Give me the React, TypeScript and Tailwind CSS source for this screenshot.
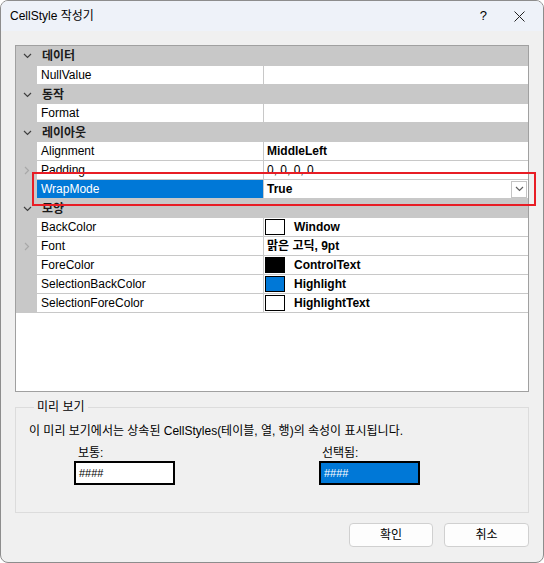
import React from "react";

type Row =
  | { kind: "cat"; label: string }
  | {
      kind: "prop";
      name: string;
      value?: string;
      bold?: boolean;
      swatch?: string;
      expand?: boolean;
      selected?: boolean;
    };

const rows: Row[] = [
  { kind: "cat", label: "데이터" },
  { kind: "prop", name: "NullValue" },
  { kind: "cat", label: "동작" },
  { kind: "prop", name: "Format" },
  { kind: "cat", label: "레이아웃" },
  { kind: "prop", name: "Alignment", value: "MiddleLeft", bold: true },
  { kind: "prop", name: "Padding", value: "0, 0, 0, 0", expand: true },
  { kind: "prop", name: "WrapMode", value: "True", bold: true, selected: true },
  { kind: "cat", label: "모양" },
  { kind: "prop", name: "BackColor", value: "Window", bold: true, swatch: "white" },
  { kind: "prop", name: "Font", value: "맑은 고딕, 9pt", bold: true, expand: true },
  { kind: "prop", name: "ForeColor", value: "ControlText", bold: true, swatch: "black" },
  { kind: "prop", name: "SelectionBackColor", value: "Highlight", bold: true, swatch: "blue" },
  { kind: "prop", name: "SelectionForeColor", value: "HighlightText", bold: true, swatch: "white" },
];

function ChevronDown({ className = "" }: { className?: string }) {
  return (
    <svg className={className} width="9" height="6" viewBox="0 0 9 6" fill="none">
      <path d="M1 1l3.5 3.5L8 1" stroke="currentColor" strokeWidth="1.2" />
    </svg>
  );
}

function ChevronRight() {
  return (
    <svg width="6" height="9" viewBox="0 0 6 9" fill="none" className="text-[#a8a8a8]">
      <path d="M1 1l3.5 3.5L1 8" stroke="currentColor" strokeWidth="1.2" />
    </svg>
  );
}

function Swatch({ color }: { color: string }) {
  const cls =
    color === "black" ? "bg-black" : color === "blue" ? "bg-[#0078d7]" : "bg-white";
  return <div className={`ml-[1px] h-[16px] w-[20px] shrink-0 border border-black ${cls}`} />;
}

function CategoryRow({ label, first }: { label: string; first?: boolean }) {
  return (
    <div className={`flex items-center bg-[#c8c8c8] ${first ? "h-[20px]" : "h-[19px]"}`}>
      <div className="flex w-[21px] justify-center pl-[1px] text-[#404040]">
        <ChevronDown />
      </div>
      <span className="pl-[5px] text-[12px] font-bold text-[#1a1a1a]">{label}</span>
    </div>
  );
}

function PropRow({ row }: { row: Extract<Row, { kind: "prop" }> }) {
  return (
    <div className="flex h-[19px]">
      <div className="flex w-[21px] shrink-0 items-center justify-center bg-[#c8c8c8]">
        {row.expand && <ChevronRight />}
      </div>
      <div className="flex flex-1 border-b border-[#c8c8c8]">
        <div
          className={`flex w-[227px] shrink-0 items-center border-r border-[#c8c8c8] pl-[4px] text-[12px] ${
            row.selected ? "bg-[#0078d7] text-white" : "text-black"
          }`}
        >
          {row.name}
        </div>
        <div className="flex flex-1 items-center text-[12px] text-black">
          {row.swatch ? (
            <>
              <Swatch color={row.swatch} />
              <span className="pl-[9px] font-bold">{row.value}</span>
            </>
          ) : (
            <span className={`pl-[3px] ${row.bold ? "font-bold" : ""}`}>{row.value}</span>
          )}
          {row.selected && (
            <div className="ml-auto mr-[1px] flex h-[17px] w-[16px] items-center justify-center border border-[#c4c4c4] bg-white text-[#606060]">
              <ChevronDown />
            </div>
          )}
        </div>
      </div>
    </div>
  );
}

export default function App() {
  return (
    <div className="relative flex h-[563px] w-[544px] flex-col overflow-hidden rounded-lg border border-[#8d8d8d] bg-[#f0f0f0] font-['Liberation_Sans','Noto_Sans_CJK_KR',sans-serif] text-black">
      {/* Title bar */}
      <div className="flex h-[30px] shrink-0 items-center bg-[#eef2f9] pl-[9px]">
        <span className="text-[12px]">CellStyle 작성기</span>
        <span className="ml-auto mr-[27px] text-[13px]">?</span>
        <svg className="mr-[18px]" width="11" height="11" viewBox="0 0 11 11" fill="none">
          <path d="M0.5 0.5l10 10M10.5 0.5l-10 10" stroke="#222" strokeWidth="1" />
        </svg>
      </div>

      <div className="flex flex-1 flex-col px-[14px] pt-[14px]">
        {/* Property grid */}
        <div className="flex h-[347px] flex-col border border-[#a0a0a0] bg-white">
          {rows.map((r, i) =>
            r.kind === "cat" ? (
              <CategoryRow key={i} label={r.label} first={i === 0} />
            ) : (
              <PropRow key={i} row={r} />
            )
          )}
        </div>

        {/* Preview group */}
        <fieldset className="mt-[7px] h-[114px] border border-[#dcdcdc] pb-0 pl-[13px]">
          <legend className="ml-[5px] px-[3px] text-[12px] leading-[16px]">미리 보기</legend>
          <div className="mt-[7px] text-[12px]">
            이 미리 보기에서는 상속된 CellStyles(테이블, 열, 행)의 속성이 표시됩니다.
          </div>
          <div className="mt-[5px] flex">
            <div className="ml-[45px] flex flex-col">
              <span className="pl-[4px] text-[12px] leading-[16px]">보통:</span>
              <div className="flex h-[24px] w-[101px] items-center border-2 border-black bg-white pl-[3px] text-[11px]">
                ####
              </div>
            </div>
            <div className="ml-[144px] flex flex-col">
              <span className="pl-[3px] text-[12px] leading-[16px]">선택됨:</span>
              <div className="flex h-[24px] w-[101px] items-center border-2 border-black bg-[#0078d7] pl-[3px] text-[11px] text-white">
                ####
              </div>
            </div>
          </div>
        </fieldset>

        {/* Buttons */}
        <div className="mt-[10px] flex justify-end gap-[11px]">
          <button className="h-[24px] w-[84px] rounded-[4px] border border-[#d0d0d0] bg-[#fdfdfd] text-[12px]">
            확인
          </button>
          <button className="h-[24px] w-[85px] rounded-[4px] border border-[#d0d0d0] bg-[#fdfdfd] text-[12px]">
            취소
          </button>
        </div>
      </div>

      {/* Red annotation box around WrapMode */}
      <div className="pointer-events-none absolute left-[31px] top-[171px] h-[34px] w-[504px] border-2 border-[#e81d25]" />
    </div>
  );
}
